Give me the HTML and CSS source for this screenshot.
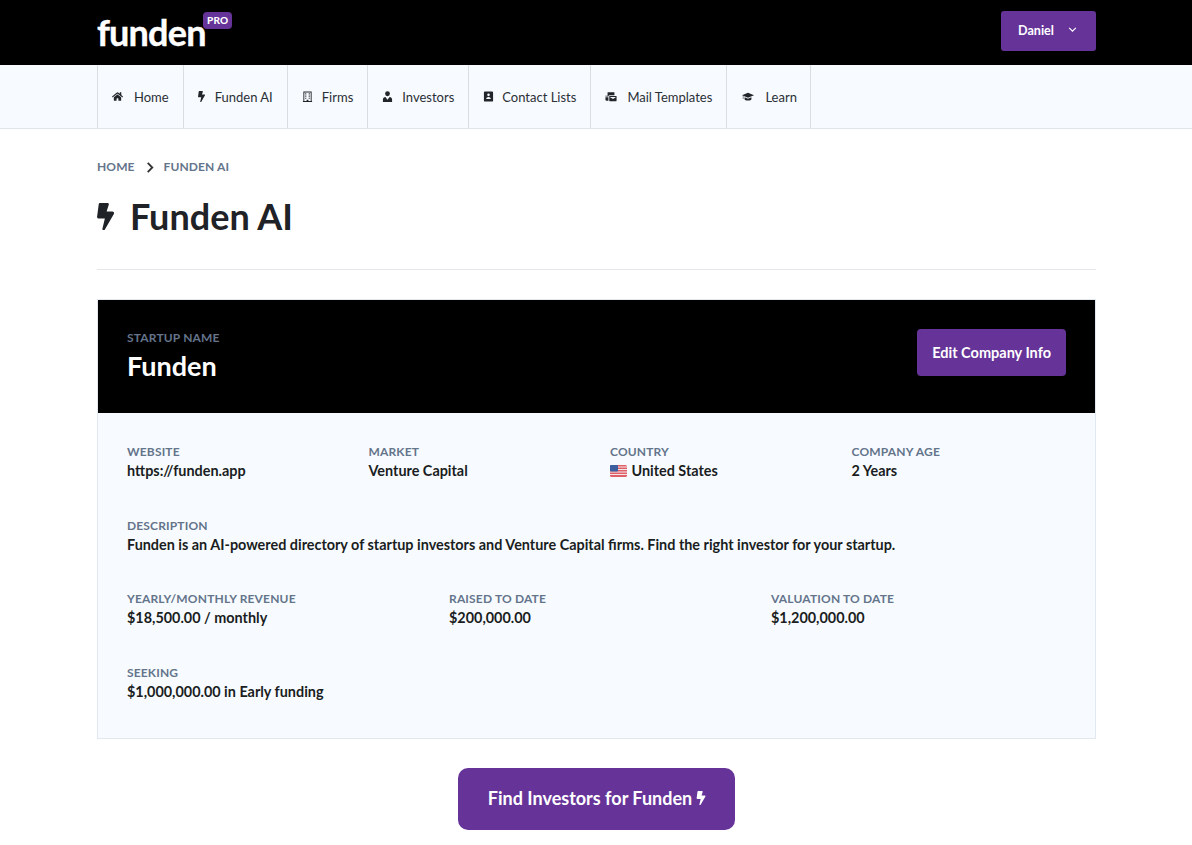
FILE: index.html
```html
<!DOCTYPE html>
<html lang="en">
<head>
    <meta charset="UTF-8">
    <meta name="viewport" content="width=device-width, initial-scale=1.0">
    <title>Funden AI</title>
    <link rel="stylesheet" href="styles.css">
</head>
<body>
    <header class="topbar">
        <div class="wrap topbar-inner">
            <a class="logo" href="#">funden<span class="pro">PRO</span></a>
            <button class="user-btn">Daniel
                <svg class="chev" viewBox="0 0 10 6"><path d="M1 1l4 4 4-4" fill="none" stroke="currentColor" stroke-width="1.4"/></svg>
            </button>
        </div>
    </header>

    <nav class="mainnav">
        <div class="wrap nav-inner">
            <a class="nav-item" href="#">
                <svg class="ico ico-home" viewBox="0 0 576 512"><path d="M280.37 148.26L96 300.11V464a16 16 0 0 0 16 16l112.06-.29a16 16 0 0 0 15.92-16V368a16 16 0 0 1 16-16h64a16 16 0 0 1 16 16v95.64a16 16 0 0 0 16 16.05L464 480a16 16 0 0 0 16-16V300L295.67 148.26a12.19 12.19 0 0 0-15.3 0zM571.6 251.47L488 182.56V44.05a12 12 0 0 0-12-12h-56a12 12 0 0 0-12 12v72.61L318.47 43a48 48 0 0 0-61 0L4.34 251.47a12 12 0 0 0-1.6 16.9l25.5 31A12 12 0 0 0 45.15 301l235.22-193.74a12.19 12.19 0 0 1 15.3 0L530.9 301a12 12 0 0 0 16.9-1.6l25.5-31a12 12 0 0 0-1.7-16.93z"/></svg>
                Home</a>
            <a class="nav-item" href="#">
                <svg class="ico ico-bolt" viewBox="0 0 320 512"><path d="M296 160H180.6l42.6-129.8C227.2 15 215.7 0 200 0H56C44 0 33.8 8.9 32.2 20.8l-32 240C-2.7 278.9 11.3 295 29 295h118.7l-46.1 194.5c-3.6 15.2 8 29.5 23.3 29.5 8.4 0 16.4-4.4 20.8-12l176-304c9.3-15.9-2.2-36-20.7-36z"/></svg>
                Funden AI</a>
            <a class="nav-item" href="#">
                <svg class="ico ico-tight" viewBox="0 0 12 12"><path fill-rule="evenodd" d="M1.500 0.500h9v10.500h.5v1H1v-1h.5zm1 1v9.500h2.500V9.500h2V11h2.500V1.500zm1 1h1.200v1.200H3.500zm3.800 0h1.200v1.200H7.300zM3.500 5h1.200v1.200H3.500zm3.800 0h1.200v1.200H7.300zM3.500 7.300h1.200v1.200H3.500zm3.800 0h1.200v1.200H7.300z"/></svg>
                Firms</a>
            <a class="nav-item" href="#">
                <svg class="ico ico-tight" viewBox="0 0 12 12"><circle cx="6" cy="3" r="2.600"/><path d="M1 12V9.200C1 7.700 2.200 6.600 3.700 6.600L6 9.500l2.300-2.900c1.500 0 2.700 1.100 2.700 2.600V12z"/></svg>
                Investors</a>
            <a class="nav-item" href="#">
                <svg class="ico ico-book" viewBox="0 0 12 12"><path fill-rule="evenodd" d="M2 0.500h8c.6 0 1 .4 1 1v9c0 .6-.4 1-1 1H2c-.6 0-1-.4-1-1v-9c0-.6.4-1 1-1zM6 2.800a1.400 1.400 0 1 0 0 2.800 1.400 1.400 0 0 0 0-2.800zM3.500 8.800h5c0-1.300-1.100-2.300-2.500-2.300s-2.500 1-2.500 2.300z"/></svg>
                Contact Lists</a>
            <a class="nav-item" href="#">
                <svg class="ico ico-wide" viewBox="0 0 14 12"><path d="M3 1h8v3.500H5.500A1.500 1.500 0 0 0 4 6H3zM0.500 5H3v1H0.500zM0.500 7H4v4H2a1.500 1.500 0 0 1-1.500-1.500z"/><path fill-rule="evenodd" d="M5.500 5.500H13c.3 0 .5.2.5.5v5c0 .3-.2.5-.5.5H5.500A.5.5 0 0 1 5 11V6c0-.3.2-.5.5-.5zM6 7l3.300 2L12.500 7v-.5H6z"/></svg>
                Mail Templates</a>
            <a class="nav-item nav-last" href="#">
                <svg class="ico ico-cap" viewBox="0 0 14 12"><path d="M7 1.500L14 4.500 7 7.500 0 4.500z"/><path d="M3 7l4 1.700L11 7v2.200c0 .8-1.800 1.500-4 1.500s-4-.7-4-1.500zM1 5.500h.6v3.300H1z"/></svg>
                Learn</a>
        </div>
    </nav>

    <main class="wrap">
        <div class="crumbs">
            <a href="#">Home</a>
            <svg class="crumb-sep" viewBox="0 0 8 12"><path d="M1.500 1l5 5-5 5" fill="none" stroke="currentColor" stroke-width="2"/></svg>
            <a href="#">Funden AI</a>
        </div>
        <h1 class="page-title">
            <svg class="title-ico" viewBox="0 0 320 512"><path d="M296 160H180.6l42.6-129.8C227.2 15 215.7 0 200 0H56C44 0 33.8 8.9 32.2 20.8l-32 240C-2.7 278.9 11.3 295 29 295h118.7l-46.1 194.5c-3.6 15.2 8 29.5 23.3 29.5 8.4 0 16.4-4.4 20.8-12l176-304c9.3-15.9-2.2-36-20.7-36z"/></svg>
            Funden AI
        </h1>
        <hr class="rule">

        <section class="card">
            <div class="card-head">
                <div class="head-text">
                    <div class="label">Startup Name</div>
                    <div class="startup-name">Funden</div>
                </div>
                <a class="edit-btn" href="#">Edit Company Info</a>
            </div>
            <div class="card-body">
                <div class="row cols-4">
                    <div><div class="label">Website</div><div class="value">https://funden.app</div></div>
                    <div><div class="label">Market</div><div class="value">Venture Capital</div></div>
                    <div><div class="label">Country</div><div class="value">
                        <svg class="flag" viewBox="0 0 17 12"><rect width="17" height="12" rx="1.5" fill="#e0606a"/><path d="M0 2h17M0 4.500h17M0 7h17M0 9.500h17" stroke="#f3e6e8" stroke-width="1"/><rect width="8" height="6.500" rx="1" fill="#3b5f9f"/></svg>
                        United States</div></div>
                    <div><div class="label">Company Age</div><div class="value">2 Years</div></div>
                </div>
                <div class="row">
                    <div class="label">Description</div>
                    <div class="value">Funden is an AI-powered directory of startup investors and Venture Capital firms. Find the right investor for your startup.</div>
                </div>
                <div class="row cols-3">
                    <div><div class="label">Yearly/Monthly Revenue</div><div class="value">$18,500.00 / monthly</div></div>
                    <div><div class="label">Raised to Date</div><div class="value">$200,000.00</div></div>
                    <div><div class="label">Valuation to Date</div><div class="value">$1,200,000.00</div></div>
                </div>
                <div class="row">
                    <div class="label">Seeking</div>
                    <div class="value">$1,000,000.00 in Early funding</div>
                </div>
            </div>
        </section>

        <div class="cta-wrap">
            <a class="cta" href="#">Find Investors for Funden
                <svg class="cta-ico" viewBox="0 0 320 512"><path d="M296 160H180.6l42.6-129.8C227.2 15 215.7 0 200 0H56C44 0 33.8 8.9 32.2 20.8l-32 240C-2.7 278.9 11.3 295 29 295h118.7l-46.1 194.5c-3.6 15.2 8 29.5 23.3 29.5 8.4 0 16.4-4.4 20.8-12l176-304c9.3-15.9-2.2-36-20.7-36z"/></svg>
            </a>
        </div>
    </main>
</body>
</html>
```

FILE: styles.css
```css
* {
    box-sizing: border-box;
}
body {
    margin: 0;
    font-family: "Lato", "Liberation Sans", sans-serif;
    color: #1a1d21;
    background: #fff;
}
a {
    color: inherit;
    text-decoration: none;
}
.wrap {
    width: 999px;
    margin-left: 97px;
}

/* top bar */
.topbar {
    background: #000;
    height: 65px;
}
.topbar-inner {
    height: 65px;
    display: flex;
    align-items: center;
    justify-content: space-between;
}
.logo {
    position: relative;
    color: #fff;
    font-size: 36px;
    font-weight: 700;
    letter-spacing: -0.8px;
    line-height: 65px;
    -webkit-text-stroke: 0.4px #fff;
}
.pro {
    position: absolute;
    left: 106px;
    top: 12px;
    background: #663399;
    color: #fff;
    font-size: 10px;
    font-weight: 900;
    letter-spacing: 0.2px;
    line-height: 17px;
    padding: 0 4px;
    border-radius: 4px;
    -webkit-text-stroke: 0;
}
.user-btn {
    width: 95px;
    height: 40px;
    margin-top: -4px;
    background: #663399;
    color: #fff;
    border: none;
    border-radius: 3px;
    font-family: inherit;
    font-size: 12.6px;
    font-weight: 700;
    display: flex;
    align-items: center;
    padding: 0 0 1px 17px;
}
.chev {
    width: 9px;
    height: 5px;
    margin-left: 14px;
    margin-top: -2px;
}

/* nav */
.mainnav {
    background: #f7fbff;
    border-bottom: 1px solid #dfe4ea;
    height: 64px;
}
.nav-inner {
    display: flex;
    height: 63px;
    border-left: 1px solid #d9dee4;
}
.nav-item {
    display: flex;
    align-items: center;
    padding: 0 14px;
    font-size: 13px;
    color: #2b2f36;
    border-right: 1px solid #d9dee4;
}
.nav-last {
    padding-right: 13px;
}
.ico {
    width: 11px;
    height: 11px;
    margin-right: 10px;
    fill: #22262b;
}
.ico-home {
    margin-right: 11px;
}
.ico-bolt {
    width: 7px;
}
.ico-tight {
    margin-right: 9px;
}
.ico-book {
    margin-right: 8px;
}
.ico-wide {
    width: 12px;
}
.ico-cap {
    width: 12px;
    margin-left: 1px;
    margin-right: 11px;
}

/* heading */
.crumbs {
    display: flex;
    align-items: center;
    margin-top: 31px;
    font-size: 12px;
    font-weight: 700;
    line-height: 14px;
    letter-spacing: 0.1px;
    text-transform: uppercase;
    color: #64748b;
}
.crumb-sep {
    width: 8px;
    height: 11px;
    margin: 0 10px 0 11px;
    color: #333;
}
.page-title {
    display: flex;
    align-items: center;
    margin: 20px 0 0;
    font-size: 36px;
    font-weight: 700;
    line-height: 44px;
    color: #1f2226;
}
.title-ico {
    width: 17px;
    height: 27px;
    margin-right: 16px;
    fill: #1f2226;
}
.rule {
    border: none;
    border-top: 1px solid #e5e7eb;
    margin: 31px 0 29px;
}

/* card */
.card {
    border: 1px solid #e2e8f0;
    width: 999px;
}
.card-head {
    background: #000;
    height: 113px;
    padding: 0 29px;
    display: flex;
    align-items: center;
    justify-content: space-between;
}
.head-text {
    margin-top: 2px;
}
.card-head .label {
    margin-bottom: 1px;
}
.startup-name {
    color: #fff;
    font-size: 27px;
    font-weight: 700;
    line-height: 38px;
}
.edit-btn {
    background: #663399;
    color: #fff;
    font-size: 14.5px;
    font-weight: 700;
    line-height: 47px;
    height: 47px;
    margin-bottom: 8px;
    padding: 0 15px;
    border-radius: 4px;
}
.card-body {
    background: #f7fbff;
    height: 325px;
    padding: 31px 29px 0;
}
.label {
    font-size: 12px;
    font-weight: 700;
    line-height: 16px;
    letter-spacing: 0.16px;
    text-transform: uppercase;
    color: #64748b;
}
.value {
    font-size: 14.4px;
    font-weight: 700;
    line-height: 21px;
    color: #1a1d21;
}
.row {
    margin-bottom: 36.6px;
}
.cols-4, .cols-3 {
    display: grid;
    width: 966px;
}
.cols-4 {
    grid-template-columns: repeat(4, 1fr);
}
.cols-3 {
    grid-template-columns: repeat(3, 1fr);
}
.flag {
    width: 17px;
    height: 12px;
    margin-right: 1px;
    vertical-align: -1px;
}

/* call to action */
.cta-wrap {
    display: flex;
    justify-content: center;
    margin-top: 29px;
}
.cta {
    display: flex;
    align-items: center;
    height: 62px;
    padding: 0 29px 2px 30px;
    background: #663399;
    color: #fff;
    font-size: 18px;
    font-weight: 700;
    border-radius: 10px;
}
.cta-ico {
    width: 10px;
    height: 14px;
    margin-left: 4px;
    fill: #fff;
}
```
